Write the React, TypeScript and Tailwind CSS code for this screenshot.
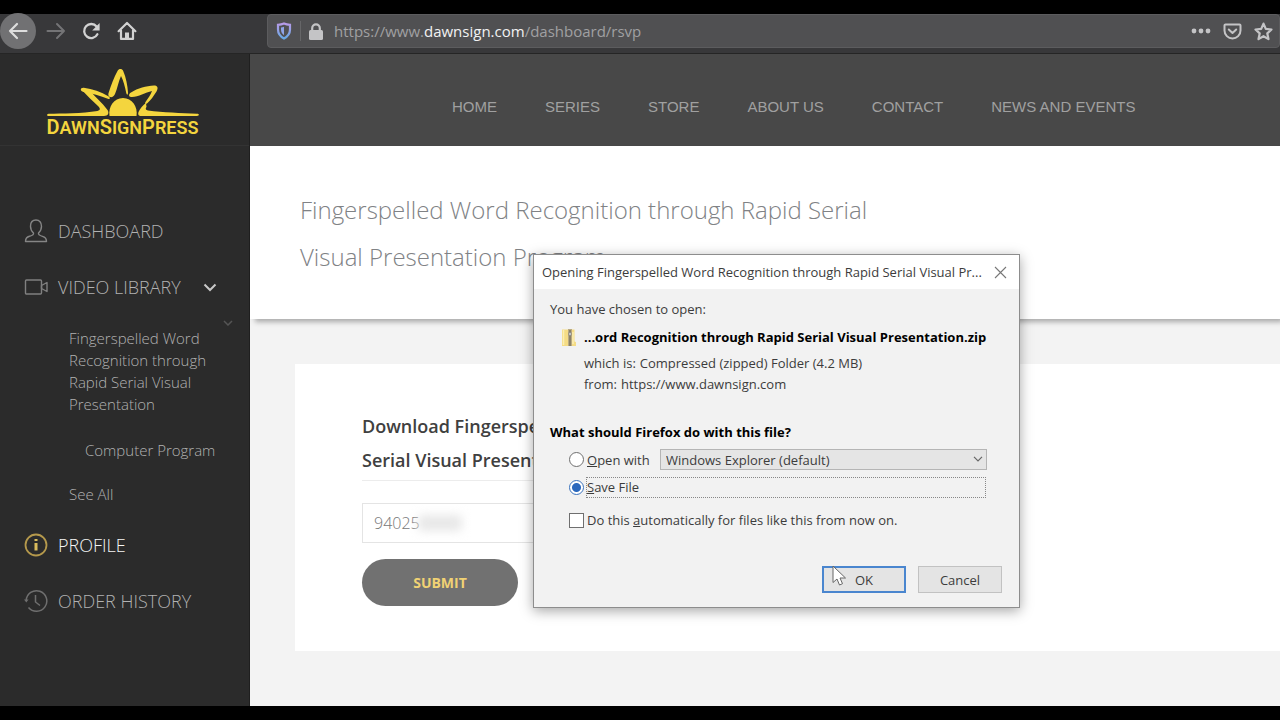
import { useState } from "react";

const NAV_LINKS = ["HOME", "SERIES", "STORE", "ABOUT US", "CONTACT", "NEWS AND EVENTS"];

function BrowserBar() {
    return (
        <div className="flex h-10 items-start border-b border-[#252525] bg-[#38383a]">
            <div className="flex h-[34px] w-[267px] shrink-0 items-center">
                <button aria-label="Back" className="flex size-9 shrink-0 items-center justify-center rounded-full bg-[#717173] text-[#dedede]">
                    <svg width="20" height="18" viewBox="0 0 20 18" fill="none" stroke="currentColor" strokeWidth="2.2" strokeLinecap="round" strokeLinejoin="round">
                        <path d="M18.5 9H2M9 2L2 9l7 7" />
                    </svg>
                </button>
                <button aria-label="Forward" className="ml-2.5 text-[#747476]">
                    <svg width="20" height="18" viewBox="0 0 20 18" fill="none" stroke="currentColor" strokeWidth="2" strokeLinecap="round" strokeLinejoin="round">
                        <path d="M1.5 9H18M11 2l7 7-7 7" />
                    </svg>
                </button>
                <button aria-label="Reload" className="ml-4 text-[#d2d2d2]">
                    <svg width="19" height="18" viewBox="0 0 19 18" fill="none" stroke="currentColor" strokeWidth="2.3" strokeLinecap="round">
                        <path d="M15.4 12.2A7 7 0 1 1 14.6 4.6" />
                        <path d="M17.6 1v7.4h-7.4z" fill="currentColor" stroke="none" />
                    </svg>
                </button>
                <button aria-label="Home" className="ml-4 text-[#d2d2d2]">
                    <svg width="20" height="20" viewBox="0 0 20 20" fill="none" stroke="currentColor" strokeWidth="2.2" strokeLinecap="round" strokeLinejoin="round">
                        <path d="M1.6 10.2L10 2l8.4 8.2M4 9.5v8.4h12V9.5" />
                        <path d="M8 17.5v-6h4v6z" fill="currentColor" stroke="none" />
                    </svg>
                </button>
            </div>
            <div className="flex h-[34px] min-w-0 flex-1 items-center rounded-sm border border-[#5c5c5e] bg-[#505052] pr-1.5 pl-2">
                <svg width="16" height="18" viewBox="0 0 16 18" fill="none">
                    <defs>
                        <linearGradient id="shield" x1="0" y1="0" x2="0" y2="1">
                            <stop offset="0" stopColor="#b79be8" />
                            <stop offset="1" stopColor="#68a9e6" />
                        </linearGradient>
                    </defs>
                    <path d="M8 1.5c2 .9 4 1.2 6 1.3v4.7c0 4-2.3 7-6 9-3.7-2-6-5-6-9V2.8c2-.1 4-.4 6-1.3z" stroke="url(#shield)" strokeWidth="2.2" />
                    <path d="M8 4.8v8.4C6 11.8 5 9.9 5 7.5v-2c1-.1 2-.3 3-.7z" fill="#8fa4e8" />
                </svg>
                <span className="mx-2 h-5 w-px bg-[#666668]" />
                <svg width="14" height="17" viewBox="0 0 14 17" className="shrink-0">
                    <path d="M3.2 8V5.2a3.8 3.8 0 0 1 7.6 0V8" fill="none" stroke="#c4c4c6" strokeWidth="2.2" />
                    <rect y="7" width="14" height="10" rx="1.5" fill="#c4c4c6" />
                </svg>
                <span className="ml-[11px] flex-1 truncate font-['Open_Sans',sans-serif] text-[15px] text-[#a0a0a2]">
                    https://www.<span className="text-[#f2f2f2]">dawnsign.com</span>/dashboard/rsvp
                </span>
                <div className="flex items-center gap-3 text-[#c4c4c6]">
                    <button aria-label="Page actions">
                        <svg width="20" height="6" viewBox="0 0 20 6" fill="currentColor">
                            <circle cx="3" cy="3" r="2.4" />
                            <circle cx="10" cy="3" r="2.4" />
                            <circle cx="17" cy="3" r="2.4" />
                        </svg>
                    </button>
                    <button aria-label="Save to Pocket">
                        <svg width="19" height="17" viewBox="0 0 19 17" fill="none" stroke="currentColor" strokeWidth="2" strokeLinecap="round" strokeLinejoin="round">
                            <path d="M2.5 1.5h14a1 1 0 0 1 1 1v5a8 8 0 0 1-16 0v-5a1 1 0 0 1 1-1z" />
                            <path d="M5.8 6.500l3.700 3.500 3.700-3.500" />
                        </svg>
                    </button>
                    <button aria-label="Bookmark this page">
                        <svg width="19" height="19" viewBox="0 0 19 19" fill="none" stroke="currentColor" strokeWidth="2.2" strokeLinejoin="round">
                            <path d="M9.5 1.600l2.300 5.300 5.700.6-4.200 3.900 1.200 5.700-5-2.900-5 2.900 1.200-5.700L1.500 7.500l5.700-.6z" />
                        </svg>
                    </button>
                </div>
            </div>
        </div>
    );
}

function Logo() {
    return (
        <a href="#home" aria-label="DawnSignPress" className="flex h-[92px] flex-col items-center border-b border-[#333] pt-3.5 pr-1 text-[#f4d53e]">
            <svg width="154" height="49" viewBox="0 0 154 48" fill="currentColor">
                <path d="M63.500 47.500C62 38 68 29.500 77 29.500s15 8.500 13.500 18z" />
                <path d="M64 28.500c-1.500-.5-2-2-1.500-3.700C65 17 68 8.500 71.500 2.500c1.500-2.600 4.400-2.600 5.700 0C80 9 81.500 17 82 24c0 2.500-1 3-1.700.8C79 18 77.500 12.500 75 7.500c-2.500 5.500-3.500 12-6 18-1 2.500-3 3.500-5 3z" />
                <path d="M62.500 30.500C54 27 46 25 37.500 23.500c-3.500-.8-3.800-4.500.3-4.200 8.700 1.200 17 4 25 8.700 1.800 1.300 1.200 3-.3 2.500z" />
                <path d="M36 21.500c5 6 11 11 16.500 16.500 1.800 2 2 3.500-1 4.500C36 45 16 45 2.500 45.300c-2 .5-2 2.200 0 2.200H58c4 0 5.500-3 3.500-6C56 34 50 29.500 44 22.500z" />
                <path d="M85 28.500c-2.500-.3-2.600-3 0-4.500C92 19.500 100 17.500 108 17c3.800 0 4.500 2.500 2.500 6-3 4.500-5.500 8.500-9.500 12-1.500 1-2.500 0-1.500-1.500 2.500-3.800 5-6.500 6.500-11C99 24 92 29 85 28.500z" />
                <path d="M100 34.500c-3 2-6 5.500-7.500 9-.8 2.500 0 4 3 4H151c2.500 0 2.500-2.200 0-2.200C135 44.500 117 44 102 42c-2-.3-3-2-1.500-3.500z" />
            </svg>
            <span className="font-[Roboto,sans-serif] text-[18px] leading-5 font-semibold whitespace-nowrap">
                <span className="text-[20px]">D</span>AWN<span className="text-[20px]">S</span>IGN<span className="text-[20px]">P</span>RESS
            </span>
        </a>
    );
}

function Sidebar() {
    return (
        <aside className="flex w-[250px] shrink-0 flex-col border-r border-[#1f1f1f] bg-[#2b2b2b] font-['Open_Sans',sans-serif] font-light text-[#b2b2b2]">
            <Logo />
            <nav className="flex flex-col pt-[71px] pl-6">
                <a href="#dashboard" className="flex h-7 items-center gap-2.5 text-lg">
                    <svg width="24" height="24" viewBox="0 0 24 24" fill="none" stroke="#858585" strokeWidth="1.4" strokeLinejoin="round">
                        <path d="M1.5 22.500h21c0-3-1.500-4.500-4-5.200-3-.8-4.500-1.300-4-3.300 2-1.800 3-4 3-6.800C17.500 3.500 15.500 1 12 1S6.500 3.500 6.500 7.200c0 2.800 1 5 3 6.800.5 2-1 2.500-4 3.300-2.500.7-4 2.200-4 5.200z" />
                    </svg>
                    DASHBOARD
                </a>
                <a href="#videos" className="mt-7 flex h-7 items-center gap-2.5 text-lg">
                    <svg width="24" height="16" viewBox="0 0 24 16" fill="none" stroke="#808080" strokeWidth="1.4" strokeLinejoin="round">
                        <rect x="1.5" y="1" width="16" height="14" rx="1" />
                        <path d="M17.5 6.500L23 3.500v9l-5.500-3z" />
                    </svg>
                    VIDEO LIBRARY
                    <svg width="14" height="9" viewBox="0 0 14 9" className="ml-3" fill="none" stroke="#c8c8c8" strokeWidth="2">
                        <path d="M1.5 1.500L7 7l5.500-5.500" />
                    </svg>
                </a>
                <div className="flex flex-col pr-4 pl-[45px] text-[15px] leading-[22px]">
                    <svg width="10" height="6" viewBox="0 0 10 6" className="mt-[19px] self-end" fill="none" stroke="#555" strokeWidth="1.5">
                        <path d="M1 1l4 4 4-4" />
                    </svg>
                    <a href="#fingerspelled" className="mt-px">
                        Fingerspelled Word<br />Recognition through<br />Rapid Serial Visual<br />Presentation
                    </a>
                    <a href="#program" className="mt-6 ml-4 whitespace-nowrap">Computer Program</a>
                    <a href="#all" className="mt-[22px]">See All</a>
                </div>
                <a href="#profile" className="mt-[26px] flex h-7 items-center gap-2.5 text-lg text-[#f5f5f5]">
                    <svg width="24" height="24" viewBox="0 0 24 24" fill="none">
                        <circle cx="12" cy="12" r="10.5" stroke="#b5994c" strokeWidth="1.8" />
                        <path d="M12 10v7.500M12 6v2" stroke="#d9bb5c" strokeWidth="3" />
                    </svg>
                    PROFILE
                </a>
                <a href="#orders" className="mt-7 flex h-7 items-center gap-2.5 text-lg">
                    <svg width="24" height="24" viewBox="0 0 24 24" fill="none" stroke="#6f6f6f" strokeWidth="1.5">
                        <path d="M2.2 11.500a10.300 10.300 0 1 1 2.300 7" />
                        <path d="M0 10.500h4.600l-2.300 3z" fill="#6f6f6f" stroke="none" />
                        <path d="M11.5 6v7l4.500 3.500" />
                    </svg>
                    ORDER HISTORY
                </a>
            </nav>
        </aside>
    );
}

function DownloadForm() {
    const [code, setCode] = useState("94025");

    return (
        <section className="mt-[45px] ml-[45px] h-[287px] bg-white pt-[45px] pl-[67px]">
            <form className="w-[560px]" onSubmit={e => e.preventDefault()}>
                <h2 className="border-b border-[#ececec] pb-[3px] font-['Open_Sans',sans-serif] text-lg leading-[34px] font-semibold text-[#404040]">
                    <label htmlFor="code">Download Fingerspelled Word Recognition through Rapid<br />Serial Visual Presentation Program</label>
                </h2>
                <div className="relative mt-[22px]">
                    <input
                        id="code"
                        value={code}
                        onChange={e => setCode(e.target.value)}
                        className="block h-10 w-full border border-[#e4e4e4] px-[11px] font-['Open_Sans',sans-serif] text-base font-light text-[#777]"
                    />
                    <span className="absolute top-3 left-[56px] h-4 w-11 rounded bg-[#e8e8e8] blur-[5px]" />
                </div>
                <button className="mt-4 h-[47px] w-[156px] rounded-full bg-[#717171] font-['Open_Sans',sans-serif] text-sm font-bold text-[#f0d274]">SUBMIT</button>
            </form>
        </section>
    );
}

function DownloadDialog() {
    const [action, setAction] = useState("save");
    const radioStyle = "size-[15px] shrink-0 appearance-none rounded-full border border-[#6f6f6f] bg-white checked:border-[#3a72bd] checked:bg-[radial-gradient(circle,#2b68bd_0_4px,#fff_5px)]";

    return (
        <div role="dialog" aria-label="Opening file" className="absolute top-[254px] left-[533px] w-[487px] border border-[#8d8d8d] bg-[#f2f2f2] pb-3.5 font-['Open_Sans',sans-serif] text-[13px] leading-5 text-[#3c3c3c] shadow-[0_3px_12px_rgba(0,0,0,0.35)]">
            <div className="flex h-[34px] items-center justify-between bg-white pr-3 pl-2">
                <span className="whitespace-nowrap">Opening Fingerspelled Word Recognition through Rapid Serial Visual Pr...</span>
                <button aria-label="Close">
                    <svg width="13" height="13" viewBox="0 0 13 13" stroke="#777" strokeWidth="1.1">
                        <path d="M1 1l11 11M12 1L1 12" />
                    </svg>
                </button>
            </div>
            <div className="pt-2.5 pr-[17px] pl-4">
                <p>You have chosen to open:</p>
                <div className="mt-2 flex items-center pl-3 text-black">
                    <svg width="15" height="17" viewBox="0 0 15 17" className="mr-[7px] shrink-0">
                        <path d="M0 .5h12.500v12l1.500.5v4H0z" fill="#f5dc85" />
                        <path d="M1.5 1v15M11 3v12" stroke="#fbeeb4" strokeWidth="1.5" />
                        <path d="M6 0h4v17H6z" fill="#b9aa83" />
                        <path d="M7 2h2M7 8h2M7 10h2M7 12h2M7 14h2M7 16h2" stroke="#5f5a4d" />
                        <path d="M7 3.500h2v3H7z" fill="#ededed" stroke="#777" strokeWidth=".7" />
                    </svg>
                    <strong className="font-bold whitespace-nowrap">...ord Recognition through Rapid Serial Visual Presentation.zip</strong>
                </div>
                <p className="mt-1.5 flex gap-1 pl-[34px]"><span>which is:</span><span>Compressed (zipped) Folder (4.2 MB)</span></p>
                <p className="mt-px flex gap-1 pl-[34px]"><span>from:</span><span>https://www.dawnsign.com</span></p>
                <h3 className="mt-7 font-bold text-black">What should Firefox do with this file?</h3>
                <div className="mt-[7px] flex items-center pr-[15px] pl-[19px]">
                    <input id="open" type="radio" name="action" checked={action === "open"} onChange={() => setAction("open")} className={radioStyle} />
                    <label htmlFor="open" className="ml-[3px] w-[73px]"><u>O</u>pen with</label>
                    <div className="relative flex-1">
                        <select aria-label="Application" className="block h-[21px] w-full appearance-none border border-[#b5b5b5] bg-[#e5e5e5] pl-[5px] text-[13px]">
                            <option>Windows Explorer (default)</option>
                        </select>
                        <svg width="10" height="6" viewBox="0 0 10 6" className="pointer-events-none absolute top-[7px] right-1" fill="none" stroke="#666" strokeWidth="1.2">
                            <path d="M1 .8l4 4 4-4" />
                        </svg>
                    </div>
                </div>
                <div className="mt-[7px] flex items-center pr-4 pl-[19px]">
                    <input id="save" type="radio" name="action" checked={action === "save"} onChange={() => setAction("save")} className={radioStyle} />
                    <label htmlFor="save" className="ml-0.5 flex-1 border border-dotted border-[#888] leading-[19px]"><u>S</u>ave File</label>
                </div>
                <div className="mt-3 flex items-center pl-[19px]">
                    <input id="always" type="checkbox" className="size-[15px] shrink-0 appearance-none border border-[#6f6f6f] bg-white checked:bg-[#2b68bd]" />
                    <label htmlFor="always" className="ml-[3px]">Do this <u>a</u>utomatically for files like this from now on.</label>
                </div>
                <div className="mt-9 flex justify-end gap-3">
                    <button className="h-[27px] w-[84px] border-2 border-[#4a86cf] bg-[#e4e4e4]">OK</button>
                    <button className="h-[27px] w-[84px] border border-[#c2c2c2] bg-[#e4e4e4]">Cancel</button>
                </div>
            </div>
            <svg width="15" height="21" viewBox="0 0 15 21" className="pointer-events-none absolute top-[310px] left-[298px]">
                <path d="M1 1v16.500l4-3.500 2.500 6 3-1.300L8 13h5.500z" fill="#fff" stroke="#666" strokeLinejoin="round" />
            </svg>
        </div>
    );
}

export default function App() {
    return (
        <div className="relative flex min-h-screen flex-col overflow-hidden bg-black py-3.5">
            <BrowserBar />
            <div className="flex flex-1">
                <Sidebar />
                <main className="flex min-w-0 flex-1 flex-col bg-[#f3f3f3]">
                    <nav className="flex h-[92px] items-center gap-12 bg-[#484848] pt-3.5 pl-[202px] font-['Liberation_Sans',sans-serif] text-[15px] whitespace-nowrap text-[#a0a0a0]">
                        {NAV_LINKS.map(name => (
                            <a key={name} href="#nav">{name}</a>
                        ))}
                    </nav>
                    <header className="h-[173px] bg-white pt-10 pl-[50px] shadow-[4px_4px_5px_-1px_rgba(0,0,0,0.3)]">
                        <h1 className="font-['Open_Sans',sans-serif] text-2xl leading-[47px] font-light text-[#808285]">
                            Fingerspelled Word Recognition through Rapid Serial<br />Visual Presentation Program
                        </h1>
                    </header>
                    <DownloadForm />
                </main>
            </div>
            <DownloadDialog />
        </div>
    );
}
